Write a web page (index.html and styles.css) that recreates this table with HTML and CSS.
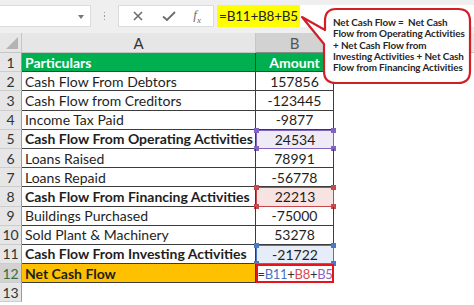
FILE: index.html
```html
<!DOCTYPE html>
<html>
<head>
<meta charset="utf-8">
<link rel="stylesheet" href="styles.css">
</head>
<body>
<div class="app">
  <div class="toolbar">
    <div class="namebox"><span class="caret"></span></div>
    <div class="dots"><i></i><i></i><i></i></div>
    <div class="fxbtns">
      <svg class="ic" width="14" height="14" viewBox="0 0 14 14"><path d="M3 3 L11 11 M11 3 L3 11" stroke="#6d6d6d" stroke-width="1.6" fill="none"/></svg>
      <svg class="ic" width="16" height="14" viewBox="0 0 16 14"><path d="M2 7.5 L6 11 L14 3" stroke="#6d6d6d" stroke-width="1.8" fill="none"/></svg>
      <span class="fx">f<sub>x</sub></span>
    </div>
    <div class="formula"><span class="ftext">=B11+B8+B5</span></div>
    <div class="formula-rest"></div>
  </div>
  <div class="sheet">
    <div class="corner"><span class="tri"></span></div>
    <div class="colhead">A</div>
    <div class="colhead sel">B</div>
    <div class="colhead rest"></div>

    <div class="rh">1</div><div class="c a hdr">Particulars</div><div class="c b hdr">Amount</div><div class="e"></div>
    <div class="rh">2</div><div class="c a">Cash Flow From Debtors</div><div class="c b">157856</div><div class="e"></div>
    <div class="rh">3</div><div class="c a">Cash Flow from Creditors</div><div class="c b">-123445</div><div class="e"></div>
    <div class="rh">4</div><div class="c a">Income Tax Paid</div><div class="c b">-9877</div><div class="e"></div>
    <div class="rh">5</div><div class="c a bold">Cash Flow From Operating Activities</div><div class="c b ref purple">24534<i class="h tl"></i><i class="h tr"></i><i class="h bl"></i><i class="h br"></i></div><div class="e"></div>
    <div class="rh">6</div><div class="c a">Loans Raised</div><div class="c b">78991</div><div class="e"></div>
    <div class="rh">7</div><div class="c a">Loans Repaid</div><div class="c b">-56778</div><div class="e"></div>
    <div class="rh">8</div><div class="c a bold">Cash Flow From Financing Activities</div><div class="c b ref red">22213<i class="h tl"></i><i class="h tr"></i><i class="h bl"></i><i class="h br"></i></div><div class="e"></div>
    <div class="rh">9</div><div class="c a">Buildings Purchased</div><div class="c b">-75000</div><div class="e"></div>
    <div class="rh">10</div><div class="c a">Sold Plant &amp; Machinery</div><div class="c b">53278</div><div class="e"></div>
    <div class="rh">11</div><div class="c a bold">Cash Flow From Investing Activities</div><div class="c b ref blue">-21722<i class="h tl"></i><i class="h tr"></i><i class="h bl"></i><i class="h br"></i></div><div class="e"></div>
    <div class="rh selrow">12</div><div class="c a bold total">Net Cash Flow</div><div class="c b active"><span class="k">=</span><span class="rb">B11</span><span class="k">+</span><span class="rr">B8</span><span class="k">+</span><span class="rp">B5</span></div><div class="e"></div>
    <div class="rh">13</div><div class="c blank"></div><div class="c blank"></div><div class="e"></div>
  </div>

  <div class="callout">
    <svg class="bubble" width="180" height="90" viewBox="0 0 180 90">
      <path d="M37 9 H159 Q171 9 171 21 V71 Q171 83 159 83 H37 Q25 83 25 71 V44 L3 17 L26 30 V21 Q26 9 37 9 Z" fill="#fff" stroke="#d21f26" stroke-width="2.2" stroke-linejoin="round"/>
    </svg>
    <div class="ctext">Net Cash Flow =&nbsp; Net Cash<br>Flow from Operating Activities<br>+ Net Cash Flow from<br>Investing Activities + Net Cash<br>Flow from Financing Activities</div>
  </div>
</div>
</body>
</html>
```
FILE: styles.css
```css
* { box-sizing: border-box; }
html, body { margin: 0; padding: 0; background: #fff; }
.app { position: relative; width: 474px; height: 305px; overflow: hidden; font-family: "Lato", "Liberation Sans", sans-serif; }

.toolbar { height: 33px; background: #efefef; display: flex; align-items: flex-start; padding-top: 5px; }
.namebox { width: 91px; height: 22px; background: #fff; border: 1px solid #dcdcdc; border-left: none; position: relative; }
.caret { position: absolute; right: 6px; top: 9px; border-left: 3.5px solid transparent; border-right: 3.5px solid transparent; border-top: 4px solid #777; }
.dots { width: 27px; height: 22px; display: flex; flex-direction: column; align-items: center; justify-content: center; gap: 2px; }
.dots i { width: 1.5px; height: 1.5px; background: #9a9a9a; display: block; }
.fxbtns { width: 96px; height: 22px; background: #fff; border: 1px solid #dcdcdc; display: flex; align-items: center; justify-content: space-around; padding: 0 4px; }
.fx { font-family: "Liberation Serif", serif; font-style: italic; color: #6d6d6d; font-size: 13px; }
.fx sub { font-size: 9px; }
.formula { margin-left: 3px; width: 83px; height: 22px; background: #ffff00; display: flex; align-items: center; padding-left: 2px; }
.ftext { font-size: 13.5px; color: #222; white-space: nowrap; letter-spacing: -0.2px; }
.formula-rest { flex: 1; height: 22px; background: #fff; }

.sheet { display: grid; grid-template-columns: 22px 234px 78px 1fr; grid-template-rows: 20px repeat(13, 19.2px); }
.corner { background: #e6e6e6; border-right: 1px solid #c6c6c6; border-bottom: 1px solid #c6c6c6; position: relative; }
.tri { position: absolute; right: 3px; bottom: 3px; border-left: 12px solid transparent; border-bottom: 12px solid #b4b4b4; }
.colhead { background: #e6e6e6; border-right: 1px solid #c6c6c6; border-bottom: 1px solid #c6c6c6; display: flex; align-items: center; justify-content: center; font-size: 15px; color: #333; }
.colhead.sel { background: #d2d2d2; border-bottom: 1px solid #8c8c8c; color: #555; }
.colhead.rest { border-right: none; }

.rh { background: #e6e6e6; border-right: 1px solid #9a9a9a; border-bottom: 1px solid #cdcdcd; display: flex; align-items: center; justify-content: center; font-size: 14px; color: #333; }
.rh.selrow { background: #d2d2d2; color: #3a6b40; }
.c { border-right: 1px solid #3c3c3c; border-bottom: 1px solid #3c3c3c; display: flex; align-items: center; font-size: 14px; color: #1e1e1e; white-space: nowrap; position: relative; }
.c.a { padding-left: 3px; }
.c.b { justify-content: center; }
.c.blank { border: none; }
.bold { font-weight: 700; }
.hdr { background: #00b050; color: #fff; font-weight: 700; }
.total { background: #ffc000; }

.ref { border: 1.5px solid; }
.ref.purple { background: #eeeaf6; border-color: #8064c0; }
.ref.red { background: #f8e3e3; border-color: #c9474b; }
.ref.blue { background: #e6edf8; border-color: #4a78c8; }
.h { position: absolute; width: 5px; height: 5px; display: block; }
.purple .h { background: #8064c0; }
.red .h { background: #c9474b; }
.blue .h { background: #4a78c8; }
.h.tl { left: -3px; top: -3px; } .h.tr { right: -3px; top: -3px; }
.h.bl { left: -3px; bottom: -3px; } .h.br { right: -3px; bottom: -3px; }

.active { border: 2.5px solid #e8141c; font-size: 13px; letter-spacing: -0.3px; }
.k { color: #333; }
.rb { color: #4a72c4; }
.rr { color: #d9484d; }
.rp { color: #8a63c2; }

.callout { position: absolute; left: 299px; top: 0; width: 180px; height: 90px; }
.bubble { position: absolute; left: 0; top: 0; }
.ctext { position: absolute; left: 34px; top: 17px; white-space: nowrap; font-weight: 700; font-size: 9.9px; line-height: 11.3px; letter-spacing: -0.1px; color: #262626; }
```
